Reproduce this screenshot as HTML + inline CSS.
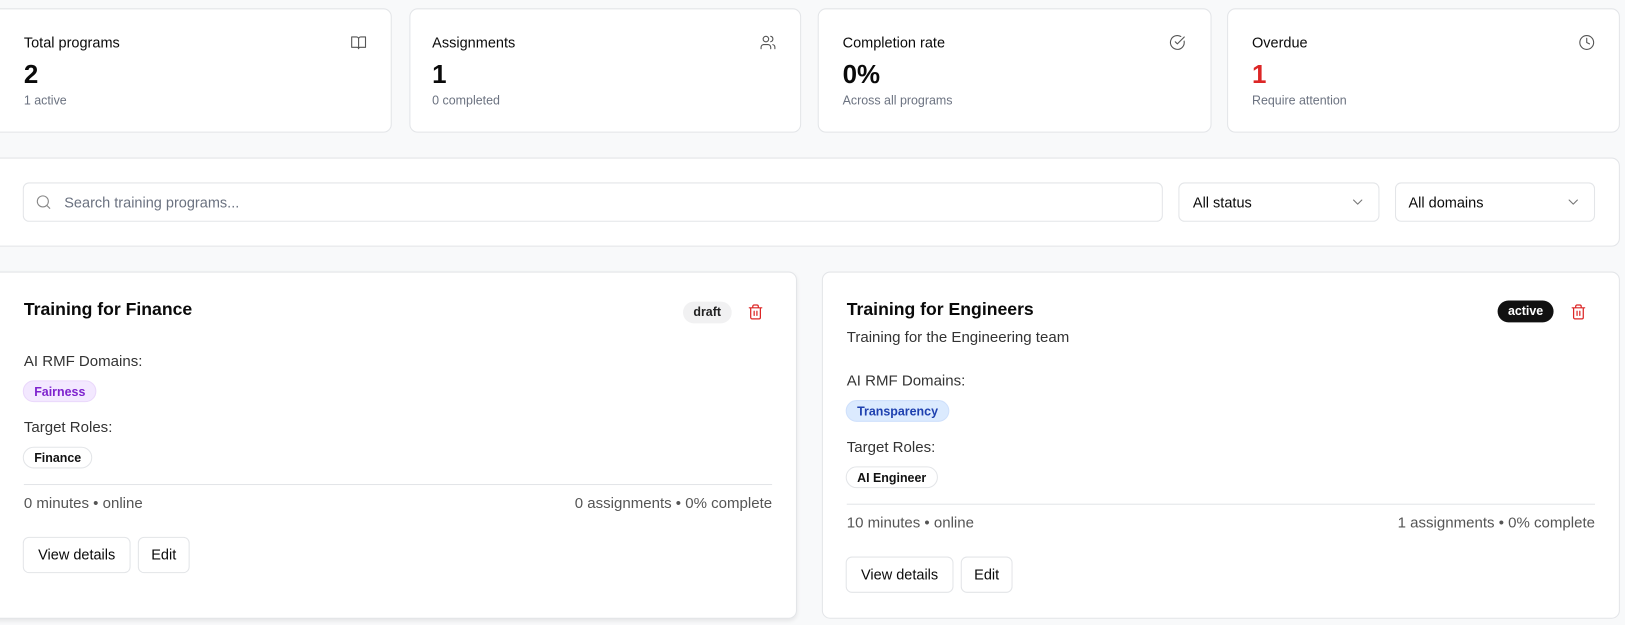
<!DOCTYPE html>
<html><head><style>
*{box-sizing:border-box;margin:0;padding:0}
body{width:1625px;height:625px;background:#f8f9fa;font-family:"Liberation Sans",sans-serif;color:#0a0a0a;position:relative;overflow:hidden}
#w{position:absolute;left:0;top:0;width:1568px;height:603px;transform:scale(1.0364);transform-origin:0 0}
.c{position:absolute;background:#fff;border:1px solid #e3e5e8;border-radius:8px}
.a{position:absolute;white-space:nowrap}
.lbl{font-size:14px;font-weight:500}
.num{font-size:25px;font-weight:700}
.sub{font-size:12px;color:#6b7280}
.ic{position:absolute;width:16px;height:16px;fill:none;stroke:#555;stroke-width:1.6;stroke-linecap:round;stroke-linejoin:round}
.inp{position:absolute;border:1px solid #e3e5e8;border-radius:6px;background:#fff;height:38px;font-size:14px}
.t{font-size:17px;font-weight:700}
.s{font-size:14.5px;color:#333}
.pill{position:absolute;height:21px;border-radius:11px;font-size:12px;font-weight:600;padding:0 10px;line-height:20px}
.btn{position:absolute;height:35px;border:1px solid #e3e5e8;border-radius:6px;background:#fff;font-size:14px;font-weight:500;line-height:33px;text-align:center}
.hr{position:absolute;height:1px;background:#e3e5e8}
.tr{position:absolute;width:16px;height:16px;fill:none;stroke:#dc2626;stroke-width:1.8;stroke-linecap:round;stroke-linejoin:round}
</style></head><body><div id="w">

<div class="c" style="left:-10px;top:8px;width:388px;height:120px"></div>
<div class="a lbl" style="left:23px;top:33px">Total programs</div>
<svg class="ic" style="left:338px;top:33px" viewBox="0 0 24 24"><path d="M2 4h7a3 3 0 0 1 3 3v14a2 2 0 0 0-2-2H2zM22 4h-7a3 3 0 0 0-3 3v14a2 2 0 0 1 2-2h8z"/></svg>
<div class="a num" style="left:23px;top:58px">2</div>
<div class="a sub" style="left:23px;top:90px">1 active</div>

<div class="c" style="left:395px;top:8px;width:378px;height:120px"></div>
<div class="a lbl" style="left:417px;top:33px">Assignments</div>
<svg class="ic" style="left:733px;top:33px" viewBox="0 0 24 24"><circle cx="9" cy="7" r="4"/><path d="M16 21v-2a4 4 0 0 0-4-4H6a4 4 0 0 0-4 4v2M16 3.1a4 4 0 0 1 0 7.8M22 21v-2a4 4 0 0 0-3-3.9"/></svg>
<div class="a num" style="left:417px;top:58px">1</div>
<div class="a sub" style="left:417px;top:90px">0 completed</div>

<div class="c" style="left:789px;top:8px;width:380px;height:120px"></div>
<div class="a lbl" style="left:813px;top:33px">Completion rate</div>
<svg class="ic" style="left:1128px;top:33px" viewBox="0 0 24 24"><path d="M21.8 10A10 10 0 1 1 17 3.3"/><path d="m9 11 3 3L22 4"/></svg>
<div class="a num" style="left:813px;top:58px">0%</div>
<div class="a sub" style="left:813px;top:90px">Across all programs</div>

<div class="c" style="left:1184px;top:8px;width:379px;height:120px"></div>
<div class="a lbl" style="left:1208px;top:33px">Overdue</div>
<svg class="ic" style="left:1523px;top:33px" viewBox="0 0 24 24"><circle cx="12" cy="12" r="10"/><path d="M12 6v6l4 2"/></svg>
<div class="a num" style="left:1208px;top:58px;color:#dc2626">1</div>
<div class="a sub" style="left:1208px;top:90px">Require attention</div>

<div class="c" style="left:-10px;top:152px;width:1573px;height:86px"></div>
<div class="inp" style="left:22px;top:176px;width:1100px"></div>
<svg class="ic" style="left:34px;top:187px;stroke:#888" viewBox="0 0 24 24"><circle cx="11" cy="11" r="8"/><path d="m21 21-4.3-4.3"/></svg>
<div class="a" style="left:62px;top:187px;font-size:14px;color:#6b7280">Search training programs...</div>
<div class="inp" style="left:1137px;top:176px;width:194px"></div>
<div class="a" style="left:1151px;top:187px;font-size:14px">All status</div>
<svg class="ic" style="left:1302px;top:187px;stroke:#777" viewBox="0 0 24 24"><path d="m6 9 6 6 6-6"/></svg>
<div class="inp" style="left:1346px;top:176px;width:193px"></div>
<div class="a" style="left:1359px;top:187px;font-size:14px">All domains</div>
<svg class="ic" style="left:1510px;top:187px;stroke:#777" viewBox="0 0 24 24"><path d="m6 9 6 6 6-6"/></svg>

<div class="c" style="left:-10px;top:262px;width:779px;height:335px;box-shadow:0 2px 4px rgba(0,0,0,.08)"></div>
<div class="a t" style="left:23px;top:289px">Training for Finance</div>
<div class="pill" style="left:659px;top:291px;background:#f1f1f2;color:#222">draft</div>
<svg class="tr" style="left:721px;top:293px" viewBox="0 0 24 24"><path d="M3 6h18M19 6v14a2 2 0 0 1-2 2H7a2 2 0 0 1-2-2V6M8 6V4a2 2 0 0 1 2-2h4a2 2 0 0 1 2 2v2M10 11v6M14 11v6"/></svg>
<div class="a s" style="left:23px;top:341px">AI RMF Domains:</div>
<div class="pill" style="left:22px;top:367px;background:#f3e8ff;color:#7e22ce;border:1px solid #ead8fb">Fairness</div>
<div class="a s" style="left:23px;top:405px">Target Roles:</div>
<div class="pill" style="left:22px;top:431px;background:#fff;border:1px solid #e3e5e8;color:#111">Finance</div>
<div class="hr" style="left:23px;top:467px;width:722px"></div>
<div class="a s" style="left:23px;top:478px;color:#555">0 minutes • online</div>
<div class="a s" style="right:823px;top:478px;color:#555">0 assignments • 0% complete</div>
<div class="btn" style="left:22px;top:518px;width:104px">View details</div>
<div class="btn" style="left:133px;top:518px;width:50px">Edit</div>

<div class="c" style="left:793px;top:262px;width:770px;height:335px"></div>
<div class="a t" style="left:817px;top:289px">Training for Engineers</div>
<div class="a s" style="left:817px;top:318px">Training for the Engineering team</div>
<div class="pill" style="left:1445px;top:290px;background:#111;color:#fff">active</div>
<svg class="tr" style="left:1515px;top:293px" viewBox="0 0 24 24"><path d="M3 6h18M19 6v14a2 2 0 0 1-2 2H7a2 2 0 0 1-2-2V6M8 6V4a2 2 0 0 1 2-2h4a2 2 0 0 1 2 2v2M10 11v6M14 11v6"/></svg>
<div class="a s" style="left:817px;top:360px">AI RMF Domains:</div>
<div class="pill" style="left:816px;top:386px;background:#dbeafe;color:#1e40af;border:1px solid #cfe0fb">Transparency</div>
<div class="a s" style="left:817px;top:424px">Target Roles:</div>
<div class="pill" style="left:816px;top:450px;background:#fff;border:1px solid #e3e5e8;color:#111">AI Engineer</div>
<div class="hr" style="left:817px;top:486px;width:722px"></div>
<div class="a s" style="left:817px;top:497px;color:#555">10 minutes • online</div>
<div class="a s" style="right:29px;top:497px;color:#555">1 assignments • 0% complete</div>
<div class="btn" style="left:816px;top:537px;width:104px">View details</div>
<div class="btn" style="left:927px;top:537px;width:50px">Edit</div>
</div></body></html>
